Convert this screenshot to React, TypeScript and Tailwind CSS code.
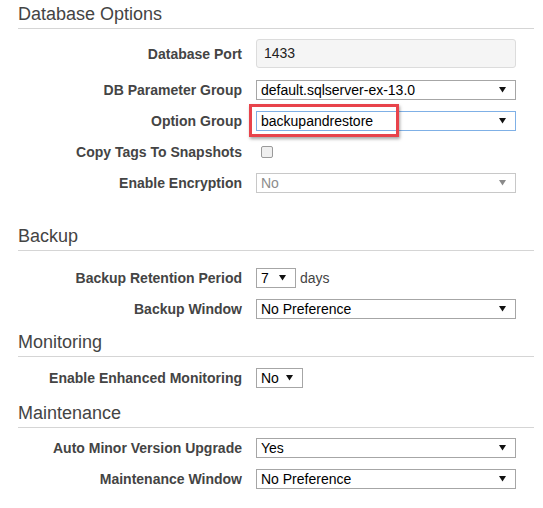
import React from 'react'

const font = { fontFamily: '"Liberation Sans", Arial, sans-serif' }

function Arrow({ muted = false }: { muted?: boolean }) {
  return (
    <svg width="7" height="7" viewBox="0 0 7 7" className="shrink-0">
      <polygon points="0,1 7,1 3.5,6.5" fill={muted ? '#8a8a8a' : '#111'} />
    </svg>
  )
}

interface SelectProps {
  value: string
  width?: string
  focused?: boolean
  disabled?: boolean
}

function Select({ value, width = 'w-[260px]', focused = false, disabled = false }: SelectProps) {
  const border = focused ? 'border-[#7fb0e6]' : disabled ? 'border-[#c8c8c8]' : 'border-[#a6a6a6]'
  return (
    <div
      className={`${width} ${border} h-[20px] border flex items-center justify-between pl-[4px] pr-[9px] text-[14px] leading-none ${
        disabled ? 'text-[#8c8c8c]' : 'text-black'
      } bg-white`}
    >
      <span>{value}</span>
      <Arrow muted={disabled} />
    </div>
  )
}

function Row({ label, children, className = 'h-[31px]' }: { label: string; children: React.ReactNode; className?: string }) {
  return (
    <div className={`flex items-center ${className}`}>
      <div className="w-[224px] text-right font-bold text-[14px] text-[#444] leading-none">{label}</div>
      <div className="ml-[14px] flex items-center">{children}</div>
    </div>
  )
}

function Heading({ title, className = '' }: { title: string; className?: string }) {
  return (
    <div className={`text-[18px] leading-[20px] pb-[4px] border-b border-[#d5d5d5] text-[#444] ${className}`}>
      {title}
    </div>
  )
}

export default function App() {
  return (
    <div className="w-[543px] h-[508px] bg-white pl-[18px] pr-[9px] overflow-hidden" style={font}>
      {/* Database Options */}
      <Heading title="Database Options" className="pt-[4px]" />

      <Row label="Database Port" className="h-[29px] mt-[10px]">
        <div className="w-[260px] h-[29px] border border-[#dcdcdc] bg-[#f5f5f5] rounded-[3px] flex items-center pl-[7px] text-[14px] text-[#222]">
          1433
        </div>
      </Row>
      <div className="mt-[6px]">
        <Row label="DB Parameter Group">
          <Select value="default.sqlserver-ex-13.0" />
        </Row>
        <Row label="Option Group">
          <div className="relative">
            <Select value="backupandrestore" focused />
            <div className="absolute left-[-7px] top-[-7px] w-[150px] h-[33px] border-[3px] border-[#e8434b] shadow-[1px_2px_3px_rgba(0,0,0,0.35)] pointer-events-none" />
          </div>
        </Row>
        <Row label="Copy Tags To Snapshots">
          <div className="w-[12px] h-[12px] ml-[5px] border border-[#9a9a9a] bg-[#efefef] rounded-[2px]" />
        </Row>
        <Row label="Enable Encryption">
          <Select value="No" disabled />
        </Row>
      </div>

      {/* Backup */}
      <Heading title="Backup" className="mt-[28px]" />
      <div className="mt-[11px]">
        <Row label="Backup Retention Period">
          <Select value="7" width="w-[40px]" />
          <span className="ml-[4px] text-[14px] text-[#444] leading-none">days</span>
        </Row>
        <Row label="Backup Window">
          <Select value="No Preference" />
        </Row>
      </div>

      {/* Monitoring */}
      <Heading title="Monitoring" className="mt-[8px]" />
      <div className="mt-[5px]">
        <Row label="Enable Enhanced Monitoring">
          <Select value="No" width="w-[47px]" />
        </Row>
      </div>

      {/* Maintenance */}
      <Heading title="Maintenance" className="mt-[10px]" />
      <div className="mt-[4px]">
        <Row label="Auto Minor Version Upgrade">
          <Select value="Yes" />
        </Row>
        <Row label="Maintenance Window">
          <Select value="No Preference" />
        </Row>
      </div>
    </div>
  )
}
